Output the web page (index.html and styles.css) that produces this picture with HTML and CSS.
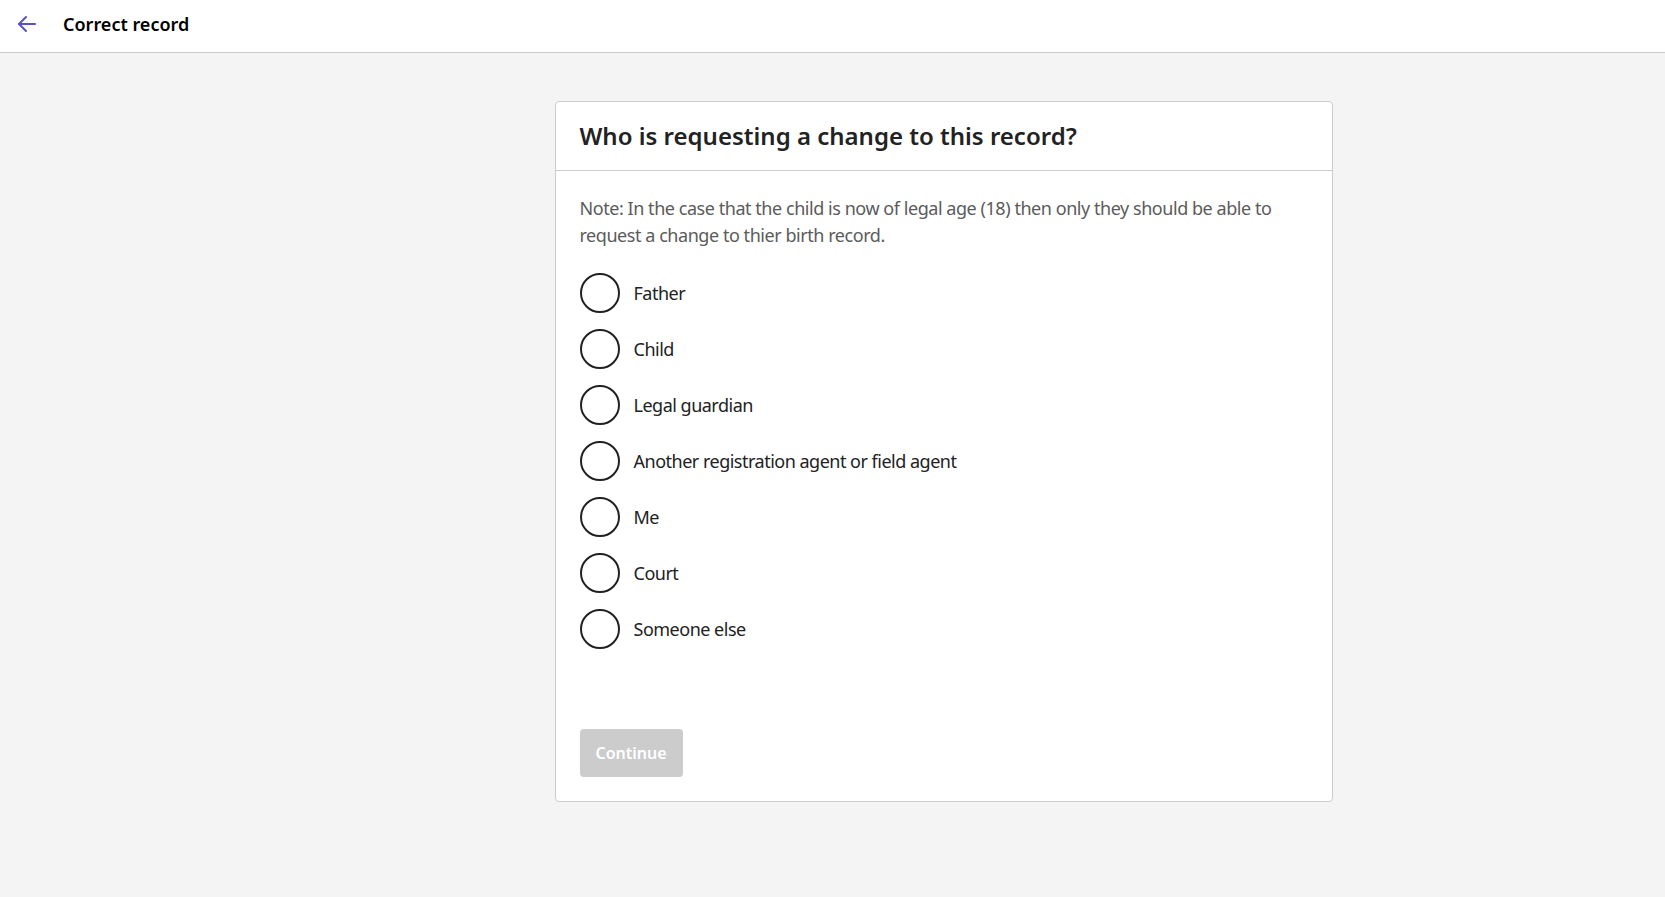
FILE: index.html
```html
<!DOCTYPE html>
<html lang="en">
<head>
<meta charset="utf-8">
<title>Correct record</title>
<link rel="stylesheet" href="styles.css">
</head>
<body>
<header class="topbar">
  <button class="back" aria-label="Back">
    <svg width="20" height="20" viewBox="0 0 20 20" fill="none" stroke="currentColor" stroke-width="2" stroke-linecap="round" stroke-linejoin="round"><path d="M18 10H2"/><path d="M9 3L2 10l7 7"/></svg>
  </button>
  <h1 class="page-title">Correct record</h1>
</header>
<main class="content">
  <section class="card">
    <div class="card-head">
      <h2 class="question">Who is requesting a change to this record?</h2>
    </div>
    <div class="card-body">
      <p class="note">Note: In the case that the child is now of legal age (18) then only they should be able to request a change to thier birth record.</p>
      <ul class="options">
        <li class="option"><span class="radio"></span><span class="label">Father</span></li>
        <li class="option"><span class="radio"></span><span class="label">Child</span></li>
        <li class="option"><span class="radio"></span><span class="label">Legal guardian</span></li>
        <li class="option"><span class="radio"></span><span class="label">Another registration agent or field agent</span></li>
        <li class="option"><span class="radio"></span><span class="label">Me</span></li>
        <li class="option"><span class="radio"></span><span class="label">Court</span></li>
        <li class="option"><span class="radio"></span><span class="label">Someone else</span></li>
      </ul>
      <button class="continue" disabled>Continue</button>
    </div>
  </section>
</main>
</body>
</html>
```
FILE: styles.css
```css
* { box-sizing: border-box; }
html, body { margin: 0; padding: 0; }
body {
  font-family: "Noto Sans", "Open Sans", sans-serif;
  background: #f4f4f4;
  color: #222222;
  min-height: 897px;
}
.topbar {
  height: 53px;
  background: #ffffff;
  border-bottom: 1px solid #cccccc;
  display: flex;
  align-items: center;
  padding-left: 17px;
  padding-bottom: 5px;
}
.back {
  border: 0;
  background: transparent;
  padding: 0;
  width: 20px;
  height: 20px;
  color: #5750c9;
  display: flex;
  align-items: center;
  justify-content: center;
  cursor: pointer;
}
.page-title {
  margin: 0 0 0 26px;
  font-size: 18px;
  font-weight: 600;
  color: #000000;
  line-height: 24px;
}
.content {
  display: flex;
  justify-content: center;
  padding: 48px 0 0 222px;
}
.card {
  width: 778px;
  background: #ffffff;
  border: 1px solid #cccccc;
  border-radius: 4px;
}
.card-head {
  border-bottom: 1px solid #cccccc;
  padding: 16px 24px;
}
.question {
  margin: 0;
  font-size: 24px;
  line-height: 36px;
  font-weight: 600;
  color: #222222;
}
.card-body {
  padding: 24px 24px 24px;
}
.note {
  margin: 0;
  font-size: 18px;
  letter-spacing: -0.45px;
  line-height: 27px;
  color: #5b5b5b;
}
.options {
  list-style: none;
  margin: 24px 0 0;
  padding: 0;
  display: flex;
  flex-direction: column;
  gap: 16px;
}
.option {
  display: flex;
  align-items: center;
  height: 40px;
}
.radio {
  width: 40px;
  height: 40px;
  border: 2px solid #222222;
  border-radius: 50%;
  flex: none;
}
.label {
  margin-left: 14px;
  font-size: 18px;
  letter-spacing: -0.5px;
  color: #222222;
}
.continue {
  margin-top: 80px;
  height: 48px;
  width: 103px;
  border: 0;
  border-radius: 4px;
  background: #cccccc;
  color: #ffffff;
  font-family: inherit;
  font-size: 16px;
  font-weight: 600;
  padding: 0;
}
```
